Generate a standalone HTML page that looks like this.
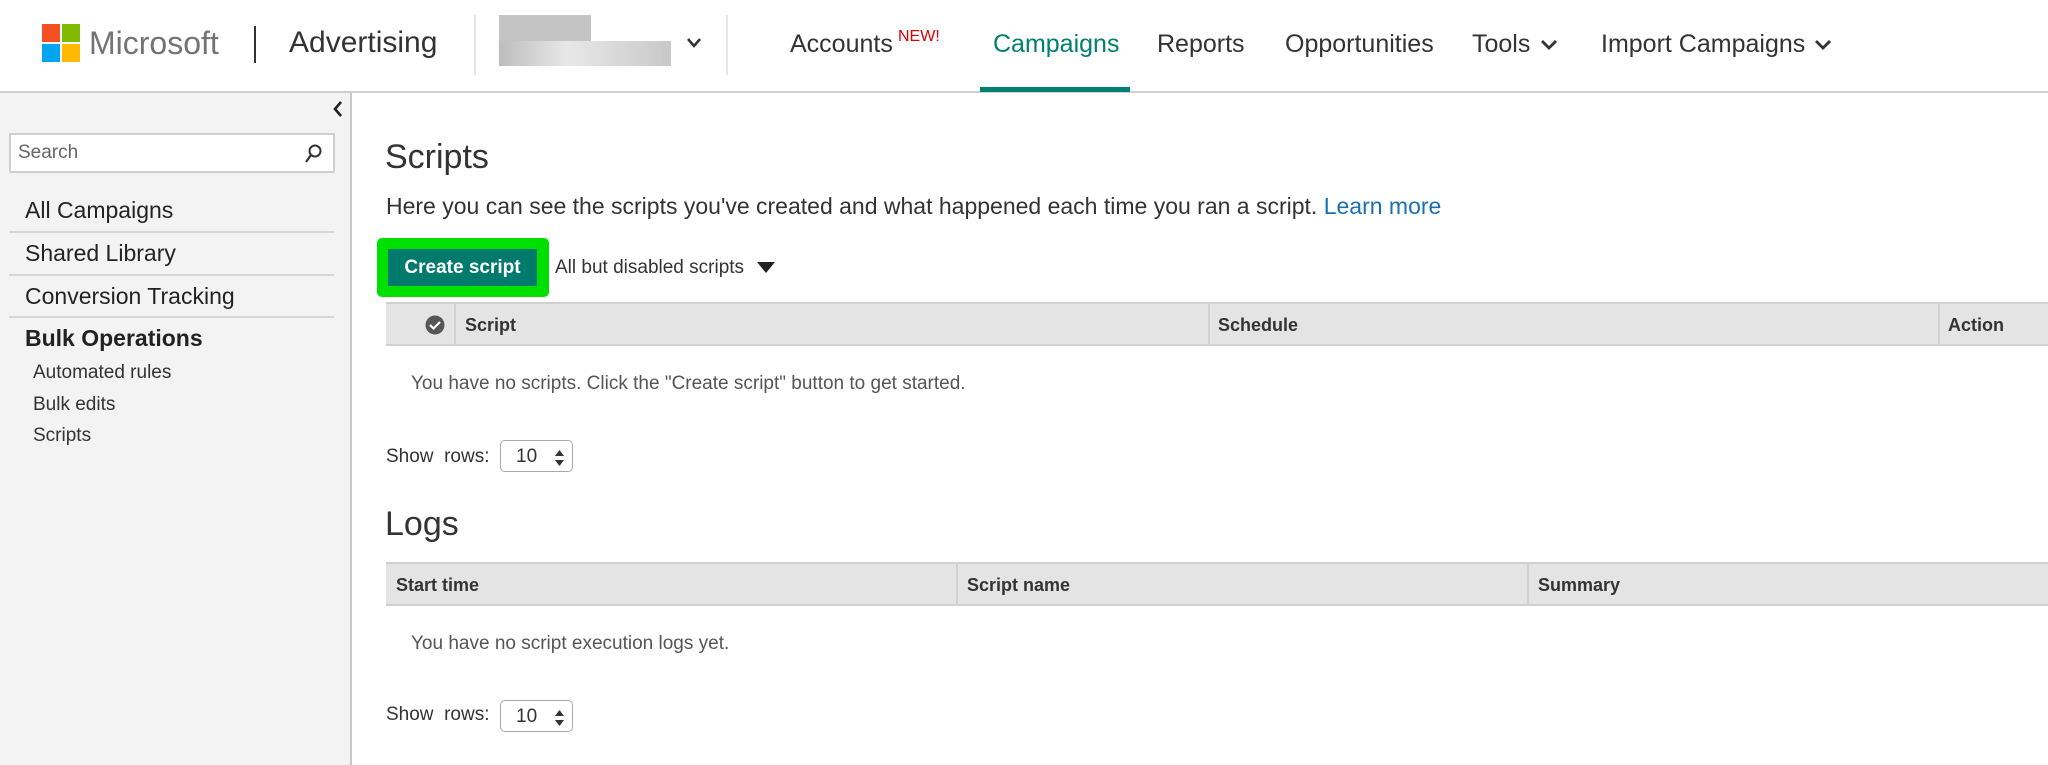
<!DOCTYPE html>
<html><head><meta charset="utf-8"><style>
*{margin:0;padding:0;box-sizing:border-box}
body{width:2048px;height:765px;overflow:hidden;background:#fff;font-family:"Liberation Sans",Arial,sans-serif;color:#333;position:relative}
.a{position:absolute;white-space:nowrap}
.hdr{position:absolute;left:0;top:0;width:2048px;height:93px;border-bottom:2px solid #d0d0d0;background:#fff}
.nav{font-size:25px;color:#333;top:30px}
.side{position:absolute;left:0;top:93px;width:352px;height:672px;background:#f3f3f3;border-right:2px solid #c8c8c8}
.sl{left:25px;font-size:23px;color:#222}
.div{position:absolute;left:9px;width:325px;height:2px;background:#d6d6d6}
.sub{left:33px;font-size:19px;color:#333}
.th{position:absolute;background:#e4e4e4;border-top:2px solid #d0d0d0;border-bottom:2px solid #d0d0d0;left:386px;width:1662px}
.th span{position:absolute;top:11px;font-size:18px;font-weight:bold;color:#333}
.col{position:absolute;top:0;bottom:0;width:2px;background:#d0d0d0}
.sel{position:absolute;width:73px;height:32px;border:1px solid #aaa;border-radius:5px;font-size:19px;padding:5px 0 0 15px;background:#fff}
</style></head><body>
<div class="hdr">
  <svg class="a" style="left:42px;top:24px" width="38" height="38" viewBox="0 0 38 38"><rect width="18" height="18" fill="#f25022"/><rect x="20" width="18" height="18" fill="#7fba00"/><rect y="20" width="18" height="18" fill="#00a4ef"/><rect x="20" y="20" width="18" height="18" fill="#ffb900"/></svg>
  <div class="a" style="left:89px;top:25px;font-size:32px;color:#737373">Microsoft</div>
  <div class="a" style="left:254px;top:26px;width:2px;height:37px;background:#333"></div>
  <div class="a" style="left:289px;top:26px;font-size:30px;color:#333">Advertising</div>
  <div class="a" style="left:474px;top:15px;width:2px;height:60px;background:#e6e6e6"></div>
  <div class="a" style="left:499px;top:15px;width:92px;height:26px;background:#c4c4c4"></div>
  <div class="a" style="left:499px;top:41px;width:172px;height:25px;background:linear-gradient(90deg,#bdbdbd,#e8e8e8 40%,#c8c8c8)"></div>
  <svg class="a" style="left:686px;top:37px" width="16" height="12" viewBox="0 0 16 12"><path d="M2 2l6 7 6-7" fill="none" stroke="#333" stroke-width="2.5"/></svg>
  <div class="a" style="left:726px;top:15px;width:2px;height:60px;background:#e6e6e6"></div>
  <div class="a nav" style="left:790px">Accounts</div>
  <div class="a" style="left:898px;top:28px;font-size:16px;color:#d00">NEW!</div>
  <div class="a nav" style="left:993px;color:#00806e">Campaigns</div>
  <div class="a" style="left:980px;top:87px;width:150px;height:5px;background:#00806e"></div>
  <div class="a nav" style="left:1157px">Reports</div>
  <div class="a nav" style="left:1285px">Opportunities</div>
  <div class="a nav" style="left:1472px">Tools</div>
  <svg class="a" style="left:1540px;top:39px" width="18" height="12" viewBox="0 0 18 12"><path d="M2 2l7 7 7-7" fill="none" stroke="#333" stroke-width="2.8"/></svg>
  <div class="a nav" style="left:1601px">Import Campaigns</div>
  <svg class="a" style="left:1814px;top:39px" width="18" height="12" viewBox="0 0 18 12"><path d="M2 2l7 7 7-7" fill="none" stroke="#333" stroke-width="2.8"/></svg>
</div>
<div class="side">
  <svg class="a" style="left:332px;top:7px" width="12" height="18" viewBox="0 0 12 18"><path d="M9 2L3 9l6 7" fill="none" stroke="#222" stroke-width="2.6"/></svg>
  <div class="a" style="left:9px;top:40px;width:326px;height:40px;background:#fff;border:2px solid #cfcfcf"></div>
  <div class="a" style="left:18px;top:49px;font-size:19px;color:#666">Search</div>
  <svg class="a" style="left:303px;top:50px" width="20" height="22" viewBox="0 0 20 22"><circle cx="12" cy="8" r="5.5" fill="none" stroke="#333" stroke-width="2"/><path d="M8 12l-5 7" stroke="#333" stroke-width="2.2"/></svg>
  <div class="a sl" style="top:104px">All Campaigns</div>
  <div class="div" style="top:138px"></div>
  <div class="a sl" style="top:147px">Shared Library</div>
  <div class="div" style="top:181px"></div>
  <div class="a sl" style="top:190px">Conversion Tracking</div>
  <div class="div" style="top:223px"></div>
  <div class="a sl" style="top:232px;font-weight:bold">Bulk Operations</div>
  <div class="a sub" style="top:269px">Automated rules</div>
  <div class="a sub" style="top:301px">Bulk edits</div>
  <div class="a sub" style="top:332px">Scripts</div>
</div>
<div class="a" style="left:385px;top:138px;font-size:34px;color:#333">Scripts</div>
<div class="a" style="left:386px;top:193px;font-size:23px;color:#333">Here you can see the scripts you've created and what happened each time you ran a script. <span style="color:#1a6fb0">Learn more</span></div>
<div class="a" style="left:377px;top:238px;width:172px;height:59px;background:#00e000;border-radius:5px"></div>
<div class="a" style="left:388px;top:249px;width:149px;height:37px;background:#007a6c;color:#fff;font-weight:bold;font-size:19px;text-align:center;line-height:37px">Create script</div>
<div class="a" style="left:555px;top:257px;font-size:19px;color:#333">All but disabled scripts</div>
<svg class="a" style="left:757px;top:262px" width="18" height="12" viewBox="0 0 18 12"><path d="M0 0h18L9 11z" fill="#222"/></svg>
<div class="th" style="top:302px;height:44px">
  <svg class="a" style="left:39px;top:11px" width="20" height="20" viewBox="0 0 20 20"><circle cx="10" cy="10" r="9.5" fill="#555"/><path d="M5 10l3.5 3.5L15 7" fill="none" stroke="#fff" stroke-width="2.2"/></svg>
  <div class="col" style="left:68px"></div><span style="left:79px">Script</span>
  <div class="col" style="left:822px"></div><span style="left:832px">Schedule</span>
  <div class="col" style="left:1552px"></div><span style="left:1562px">Action</span>
</div>
<div class="a" style="left:411px;top:373px;font-size:19px;color:#555">You have no scripts. Click the "Create script" button to get started.</div>
<div class="a" style="left:386px;top:446px;font-size:19px;color:#333">Show&nbsp; rows:</div>
<div class="sel" style="left:500px;top:440px">10<svg style="position:absolute;right:8px;top:9px" width="9" height="16" viewBox="0 0 9 16"><path d="M0 6L4.5 0 9 6zM0 10l4.5 6L9 10z" fill="#333"/></svg></div>
<div class="a" style="left:385px;top:505px;font-size:34px;color:#333">Logs</div>
<div class="th" style="top:562px;height:44px">
  <span style="left:10px">Start time</span>
  <div class="col" style="left:570px"></div><span style="left:581px">Script name</span>
  <div class="col" style="left:1141px"></div><span style="left:1152px">Summary</span>
</div>
<div class="a" style="left:411px;top:633px;font-size:19px;color:#555">You have no script execution logs yet.</div>
<div class="a" style="left:386px;top:704px;font-size:19px;color:#333">Show&nbsp; rows:</div>
<div class="sel" style="left:500px;top:700px">10<svg style="position:absolute;right:8px;top:9px" width="9" height="16" viewBox="0 0 9 16"><path d="M0 6L4.5 0 9 6zM0 10l4.5 6L9 10z" fill="#333"/></svg></div>
</body></html>
